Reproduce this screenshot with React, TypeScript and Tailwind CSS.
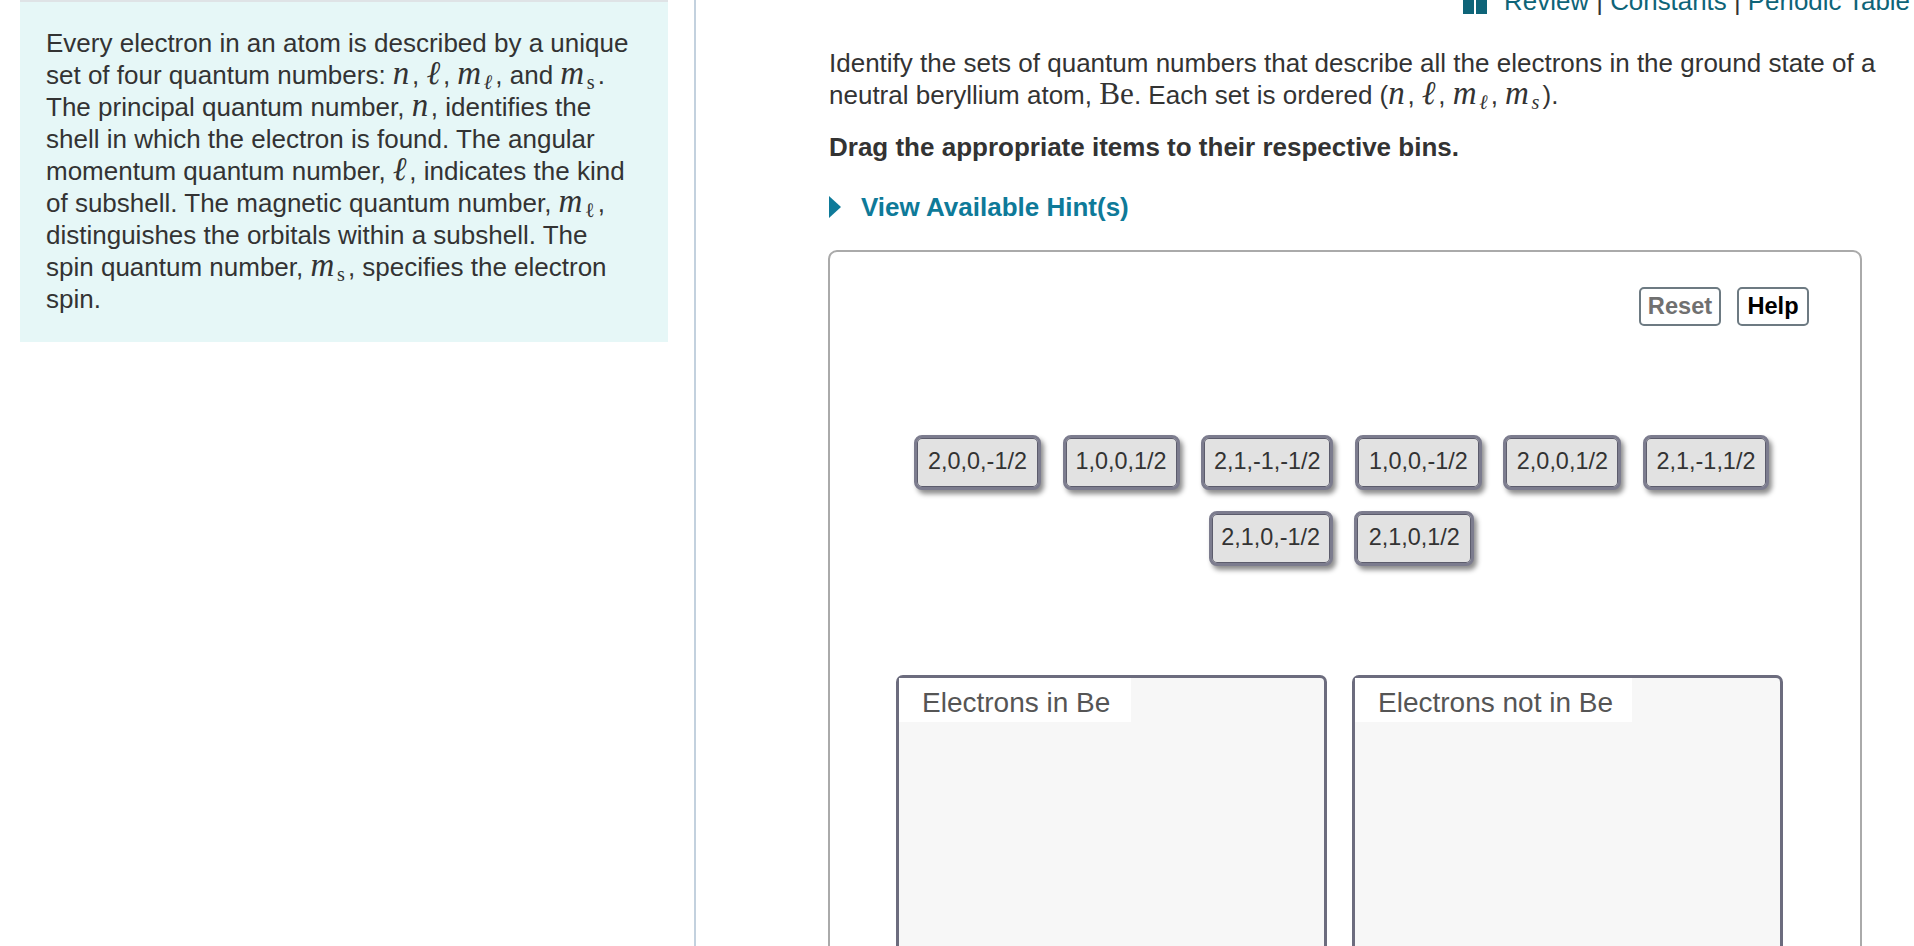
const sans = "font-['Liberation_Sans',Arial,sans-serif]";

const V = ({ children }: { children: React.ReactNode }) => (
  <span className="font-['Liberation_Serif',serif] italic text-[1.27em] leading-[0px] tracking-[0.08em]">{children}</span>
);
const Sub = ({ children }: { children: React.ReactNode }) => (
  <sub className="font-['Liberation_Serif',serif] mr-[3px] text-[0.78em] leading-[0px]">{children}</sub>
);

const chipsRow = [
  { label: "2,0,0,-1/2", w: "w-[127px]" },
  { label: "1,0,0,1/2", w: "w-[117px]" },
  { label: "2,1,-1,-1/2", w: "w-[132px]" },
  { label: "1,0,0,-1/2", w: "w-[127px]" },
  { label: "2,0,0,1/2", w: "w-[118px]" },
  { label: "2,1,-1,1/2", w: "w-[126px]" },
  { label: "2,1,0,-1/2", w: "w-[124px]" },
  { label: "2,1,0,1/2", w: "w-[120px]" },
];

const Bin = ({ title, w, headW }: { title: string; w: string; headW: string }) => (
  <div className={`${w} h-[300px] bg-[#f7f7f7] border-[3px] border-b-0 border-[#6c6c7e] rounded-t-[7px]`}>
    <div className={`${headW} h-[44px] bg-white pl-[23px] pt-[6px] flex items-center text-[28px] text-[#555]`}>{title}</div>
  </div>
);

export default function App() {
  return (
    <div className={`${sans} flex h-[946px] w-[1914px] overflow-hidden bg-white text-[#333]`}>
      {/* left column */}
      <div className="w-[696px] shrink-0 border-r-2 border-[#c3d1de] pl-5 pr-[26px]">
        <div className="bg-[#e6f7f7] border-t-2 border-[#dfe3e6] h-[342px] pl-[26px] pr-[36px] pt-[25px] text-[26px] leading-[32px]">
          Every electron in an atom is described by a unique set of four quantum numbers: <V>n</V>, <V>ℓ</V>,{" "}
          <V>m</V><Sub><i>ℓ</i></Sub>, and <V>m</V><Sub>s</Sub>. The principal quantum number, <V>n</V>, identifies the
          shell in which the electron is found. The angular momentum quantum number, <V>ℓ</V>, indicates the kind of
          subshell. The magnetic quantum number, <V>m</V><Sub>ℓ</Sub>, distinguishes the orbitals within a subshell. The
          spin quantum number, <V>m</V><Sub>s</Sub>, specifies the electron spin.
        </div>
      </div>

      {/* right column */}
      <div className="flex-1 pl-[132px] pr-[52px]">
        <div className="-mr-[48px] -mt-[13px] flex h-[28px] items-center justify-end gap-[17px] text-[25.9px] leading-[28px]">
          <svg width="24" height="26" viewBox="0 0 24 26" className="shrink-0">
            <path d="M0 0h11v26H0zM13 0h11v26H13z" fill="#0e6478" />
          </svg>
          <div className="whitespace-nowrap text-[#0e6478]">
            Review <span className="text-[#333]">|</span> Constants <span className="text-[#333]">|</span> Periodic Table
          </div>
        </div>

        <p className="mt-[32px] -mr-[20px] pl-px text-[26px] leading-[32px]">
          Identify the sets of quantum numbers that describe all the electrons in the ground state of a neutral
          beryllium atom, <span className="font-['Liberation_Serif',serif] text-[1.2em] leading-[0px]">Be</span>. Each set is ordered (
          <V>n</V>, <V>ℓ</V>, <V>m</V><Sub><i>ℓ</i></Sub>, <V>m</V><Sub><i>s</i></Sub>).
        </p>
        <p className="mt-[20px] pl-px text-[26px] leading-[32px] font-bold">Drag the appropriate items to their respective bins.</p>

        <div className="mt-[28px] flex h-[32px] items-center gap-[20px] pl-px text-[#0e7a99] text-[26px] font-bold">
          <svg width="12" height="22" viewBox="0 0 12 22" className="shrink-0">
            <path d="M0 0l12 11L0 22z" fill="#0e7a99" />
          </svg>
          View Available Hint(s)
        </div>

        <div className="mt-[27px] h-[800px] rounded-t-[9px] border-2 border-[#aaa]">
          <div className="flex justify-end gap-4 pr-[51px] pt-[35px]">
            <button className="h-[39px] w-[82px] rounded-[5px] border-2 border-[#6d7a82] bg-white text-[23.6px] font-bold text-[#707070]">Reset</button>
            <button className="h-[39px] w-[72px] rounded-[5px] border-2 border-[#6d7a82] bg-white text-[23.6px] font-bold text-black">Help</button>
          </div>
          <div className="mt-[109px] ml-[84px] flex w-[855px] flex-wrap justify-center gap-x-[21.6px] gap-y-[21px]">
            {chipsRow.map((c) => (
              <div
                key={c.label}
                className={`${c.w} flex h-[55px] items-center justify-center rounded-[8px] border-[3px] border-[#7c7c8e] bg-[#e2e2e2] pb-[2px] text-[23.4px] text-[#333] shadow-[inset_0_0_0_1px_#5c5c6c,3px_4px_5px_rgba(0,0,0,0.45)]`}
              >
                {c.label}
              </div>
            ))}
          </div>
          <div className="mt-[109px] ml-[66px] flex gap-[25px]">
            <Bin title="Electrons in Be" w="w-[431px]" headW="w-[232px]" />
            <Bin title="Electrons not in Be" w="w-[431px]" headW="w-[277px]" />
          </div>
        </div>
      </div>
    </div>
  );
}
